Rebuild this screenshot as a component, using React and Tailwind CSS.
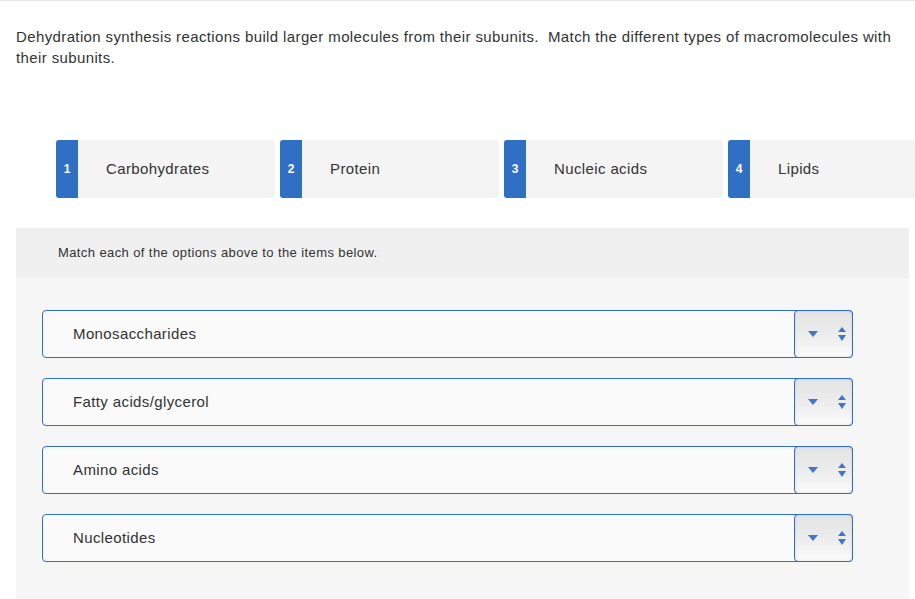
import React from "react";

const options = ["Carbohydrates", "Protein", "Nucleic acids", "Lipids"];
const items = ["Monosaccharides", "Fatty acids/glycerol", "Amino acids", "Nucleotides"];

const SelectBox = () => (
  <div className="relative flex h-[48px] w-[59px] shrink-0 items-center justify-between rounded-[4px] border border-[#2f6fc4] bg-gradient-to-b from-[#e4e4e4] via-[#ececec] to-[#fbfbfb] pl-[13px] pr-[6px] shadow-[inset_0_0_3px_rgba(0,0,0,0.12)]">
    <svg width="10" height="6" viewBox="0 0 10 6">
      <path d="M0 0h10L5 6z" fill="#3f78c6" />
    </svg>
    <svg width="8" height="14" viewBox="0 0 8 14">
      <path d="M4 0l4 5H0z" fill="#3f78c6" />
      <path d="M0 8h8l-4 6z" fill="#3f78c6" />
    </svg>
  </div>
);

export default function App() {
  return (
    <div className="min-h-screen w-[915px] overflow-hidden border-t border-[#e8e8e8] bg-white font-['Liberation_Sans',Arial,sans-serif] text-[#333]">
      <p className="px-4 pt-[25px] text-[15px] leading-[21px] tracking-[0.38px] text-[#333]">
        Dehydration synthesis reactions build larger molecules from their subunits.&nbsp; Match the different types of
        macromolecules with their subunits.
      </p>

      <div className="mt-[72px] flex gap-[5px] pl-[56px]">
        {options.map((o, i) => (
          <div key={o} className="flex h-[58px] w-[219px] shrink-0 items-center rounded-[3px] bg-[#f4f4f4]">
            <div className="flex h-full w-[22px] items-center justify-center rounded-l-[3px] bg-[#2f6fc4] text-[12px] font-bold text-white">
              {i + 1}
            </div>
            <span className="pl-[28px] text-[15px] tracking-[0.38px]">{o}</span>
          </div>
        ))}
      </div>

      <div className="mx-4 mt-[30px] w-[893px] bg-[#f6f6f6] pb-10">
        <div className="flex h-[50px] items-center bg-[#f0f0f0] pl-[42px] text-[13px] tracking-[0.4px]">
          Match each of the options above to the items below.
        </div>
        <div className="flex flex-col gap-[20px] pl-[26px] pt-8">
          {items.map((t) => (
            <div key={t} className="flex h-[48px] w-[811px] items-center rounded-[4px] border border-[#2f6fc4] bg-[#fafafa]">
              <span className="flex-1 pl-[30px] text-[15px] tracking-[0.38px]">{t}</span>
              <div className="-my-px -mr-px">
                <SelectBox />
              </div>
            </div>
          ))}
        </div>
      </div>
    </div>
  );
}
